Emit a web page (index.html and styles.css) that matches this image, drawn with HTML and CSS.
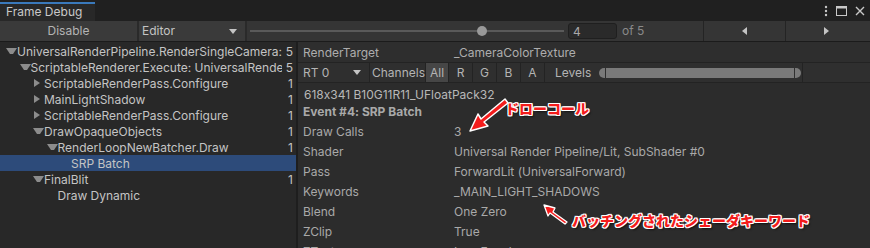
FILE: index.html
```html
<!DOCTYPE html>
<html lang="en">
<head>
  <meta charset="UTF-8" />
  <title>Frame Debug</title>
  <link rel="stylesheet" href="styles.css">
</head>
<body>

  <div class="window">
    <div class="titlebar">
      <div class="tab">Frame Debug</div>
      <div class="win-icons">
        <svg width="4" height="12" viewBox="0 0 4 12"><circle cx="2" cy="2" r="1.2" fill="#c8c8c8"/><circle cx="2" cy="6" r="1.2" fill="#c8c8c8"/><circle cx="2" cy="10" r="1.2" fill="#c8c8c8"/></svg>
        <svg width="11" height="10" viewBox="0 0 11 10"><rect x="0.5" y="0.5" width="10" height="9" fill="none" stroke="#c8c8c8"/><rect x="0.5" y="0.5" width="10" height="2" fill="#c8c8c8"/></svg>
        <svg width="10" height="10" viewBox="0 0 10 10"><path d="M1 1 L9 9 M9 1 L1 9" stroke="#c8c8c8" stroke-width="1.4"/></svg>
      </div>
    </div>

    <div class="toolbar">
      <div class="tb-btn disable">Disable</div>
      <div class="tb-btn dropdown">Editor <span class="caret"></span></div>
      <div class="slider">
        <div class="track"></div>
        <div class="thumb"></div>
      </div>
      <div class="num-field">4</div>
      <div class="of">of 5</div>
      <div class="step"><span class="tri left"></span></div>
      <div class="step"><span class="tri right"></span></div>
    </div>

    <div class="main">
      <div class="tree">
        <div class="row" style="--lvl:0"><span class="arrow open"></span><span class="name">UniversalRenderPipeline.RenderSingleCamera: Main Camera</span><span class="count">5</span></div>
        <div class="row" style="--lvl:1"><span class="arrow open"></span><span class="name">ScriptableRenderer.Execute: UniversalRenderPipelineAsset_Renderer</span><span class="count">5</span></div>
        <div class="row" style="--lvl:2"><span class="arrow closed"></span><span class="name">ScriptableRenderPass.Configure</span><span class="count">1</span></div>
        <div class="row" style="--lvl:2"><span class="arrow closed"></span><span class="name">MainLightShadow</span><span class="count">1</span></div>
        <div class="row" style="--lvl:2"><span class="arrow closed"></span><span class="name">ScriptableRenderPass.Configure</span><span class="count">1</span></div>
        <div class="row" style="--lvl:2"><span class="arrow open"></span><span class="name">DrawOpaqueObjects</span><span class="count">1</span></div>
        <div class="row" style="--lvl:3"><span class="arrow open"></span><span class="name">RenderLoopNewBatcher.Draw</span><span class="count">1</span></div>
        <div class="row selected" style="--lvl:4"><span class="arrow"></span><span class="name">SRP Batch</span><span class="count"></span></div>
        <div class="row" style="--lvl:2"><span class="arrow open"></span><span class="name">FinalBlit</span><span class="count">1</span></div>
        <div class="row" style="--lvl:3"><span class="arrow"></span><span class="name">Draw Dynamic</span><span class="count"></span></div>
      </div>

      <div class="details">
        <div class="head-row">
          <span class="label">RenderTarget</span>
          <span class="value">_CameraColorTexture</span>
        </div>
        <div class="rt-bar">
          <div class="cell rt">RT 0 <span class="caret"></span></div>
          <div class="cell chan-label">Channels</div>
          <div class="cell ch on">All</div>
          <div class="cell ch">R</div>
          <div class="cell ch">G</div>
          <div class="cell ch">B</div>
          <div class="cell ch">A</div>
          <div class="cell levels">
            <span>Levels</span>
            <div class="range"><span class="cap l"></span><span class="fill"></span><span class="cap r"></span></div>
          </div>
        </div>
        <div class="info format">618x341 B10G11R11_UFloatPack32</div>
        <div class="info event">Event #4: SRP Batch</div>
        <div class="props">
          <span>Draw Calls</span><span>3</span>
          <span>Shader</span><span>Universal Render Pipeline/Lit, SubShader #0</span>
          <span>Pass</span><span>ForwardLit (UniversalForward)</span>
          <span>Keywords</span><span>_MAIN_LIGHT_SHADOWS</span>
          <span>Blend</span><span>One Zero</span>
          <span>ZClip</span><span>True</span>
          <span>ZTest</span><span>LessEqual</span>
        </div>
      </div>
    </div>

    <!-- annotations -->
    <div class="note note-calls">ドローコール</div>
    <div class="note note-keywords">バッチングされたシェーダキーワード</div>
    <svg class="pointer p1" width="44" height="40" viewBox="0 0 44 40">
      <path d="M38 4 L14 24 L11 19 L3 36 L21 31 L17 27 L41 8 Z" fill="#f41c1c" stroke="#fff" stroke-width="1.5" stroke-linejoin="round"/>
    </svg>
    <svg class="pointer p2" width="28" height="24" viewBox="0 0 28 24">
      <path d="M25 20 L11 10 L13 6 L2 3 L6 14 L8 11 L23 22 Z" fill="#f41c1c" stroke="#fff" stroke-width="1.3" stroke-linejoin="round"/>
    </svg>
  </div>

</body>
</html>
```

FILE: styles.css
```css
* {
  box-sizing: border-box;
}
body {
  margin: 0;
  background: #282828;
  font-family: Inter, "Noto Sans", sans-serif;
  font-size: 12px;
  font-feature-settings: "calt" 0;
  color: #c4c4c4;
}

.window {
  position: relative;
  width: 870px;
  height: 248px;
  overflow: hidden;
  display: flex;
  flex-direction: column;
}

/* title bar */
.titlebar {
  height: 21px;
  background: #202020;
  display: flex;
  align-items: flex-end;
  justify-content: space-between;
}
.tab {
  width: 95px;
  height: 19px;
  background: #282828;
  border-top: 2px solid #3a79bb;
  padding-left: 6px;
  line-height: 16px;
  color: #c8c8c8;
}
.win-icons {
  display: flex;
  align-items: center;
  gap: 8px;
  height: 21px;
  padding-right: 5px;
}

/* toolbar */
.toolbar {
  height: 21px;
  background: #353535;
  border-bottom: 1px solid #1b1b1b;
  display: flex;
  align-items: stretch;
}
.tb-btn {
  background: #3a3a3a;
  border-right: 2px solid #2a2a2a;
  line-height: 20px;
  color: #c4c4c4;
}
.disable {
  width: 139px;
  text-align: center;
  color: #b4b4b4;
}
.dropdown {
  width: 108px;
  padding-left: 3px;
  position: relative;
}
.caret {
  position: absolute;
  right: 8px;
  top: 8px;
  border-left: 4px solid transparent;
  border-right: 4px solid transparent;
  border-top: 5px solid #c4c4c4;
}
.slider {
  position: relative;
  width: 318px;
  margin-left: 3px;
}
.track {
  position: absolute;
  left: 0;
  right: 4px;
  top: 9px;
  height: 2px;
  background: #5a5a5a;
}
.thumb {
  position: absolute;
  left: 227px;
  top: 5px;
  width: 10px;
  height: 10px;
  border-radius: 50%;
  background: #999999;
}
.num-field {
  width: 49px;
  margin: 2px 0;
  background: #2a2a2a;
  border: 1px solid #1f1f1f;
  border-radius: 3px;
  padding-left: 4px;
  line-height: 15px;
  color: #a8a8a8;
}
.of {
  width: 86px;
  padding-left: 5px;
  line-height: 20px;
  color: #8a8a8a;
}
.step {
  width: 82px;
  border-left: 1px solid #242424;
  display: flex;
  align-items: center;
  justify-content: center;
}
.tri {
  border-top: 4px solid transparent;
  border-bottom: 4px solid transparent;
}
.tri.left { border-right: 5px solid #c4c4c4; }
.tri.right { border-left: 5px solid #c4c4c4; }

/* main area */
.main {
  flex: 1;
  display: flex;
  min-height: 0;
}
.tree {
  width: 298px;
  padding-top: 1px;
  background: #282828;
  border-right: 2px solid #1e1e1e;
}
.row {
  display: flex;
  align-items: center;
  height: 16px;
  padding-left: calc(5px + var(--lvl) * 13.5px);
  padding-right: 3px;
  white-space: nowrap;
}
.row.selected {
  background: #2d4b7a;
}
.row .name {
  flex: 1;
  overflow: hidden;
  margin-right: 3px;
  color: #c4c4c4;
}
.row .count {
  width: 8px;
  text-align: right;
  color: #c4c4c4;
}
.arrow {
  width: 12px;
  flex: none;
}
.arrow.open::before {
  content: "";
  display: block;
  margin-left: 1px;
  border-left: 4px solid transparent;
  border-right: 4px solid transparent;
  border-top: 6px solid #8c8c8c;
}
.arrow.closed::before {
  content: "";
  display: block;
  margin-left: 2px;
  border-top: 4px solid transparent;
  border-bottom: 4px solid transparent;
  border-left: 6px solid #8c8c8c;
}

.details {
  flex: 1;
  background: #2c2c2c;
  color: #adadad;
}
.head-row {
  height: 21px;
  display: grid;
  grid-template-columns: 151px 1fr;
  align-items: center;
  padding-left: 5px;
  padding-top: 1px;
  background: #2e2e2e;
  border-bottom: 1px solid #232323;
}
.rt-bar {
  height: 20px;
  display: flex;
  background: #2f2f2f;
  border-bottom: 1px solid #232323;
}
.cell {
  border-right: 1px solid #232323;
  line-height: 19px;
  color: #b4b4b4;
}
.rt {
  position: relative;
  width: 72px;
  padding-left: 5px;
}
.rt .caret {
  top: 7px;
}
.chan-label {
  width: 56px;
  padding-left: 2px;
}
.ch {
  width: 24px;
  text-align: center;
}
.ch.on {
  width: 23px;
  background: #464646;
}
.levels {
  width: 258px;
  display: flex;
  align-items: center;
  gap: 8px;
  padding-left: 10px;
}
.range {
  display: flex;
  align-items: center;
  height: 10px;
  width: 202px;
}
.range .fill {
  flex: 1;
  height: 10px;
  background: #7a7a7a;
  margin: 0 1px;
}
.range .cap {
  width: 6px;
  height: 10px;
  background: #7a7a7a;
}
.range .cap.l { border-radius: 5px 0 0 5px; }
.range .cap.r { border-radius: 0 5px 5px 0; }

.info {
  height: 17px;
  line-height: 17px;
  padding-left: 6px;
  color: #b8b8b8;
}
.format {
  margin-top: 3px;
}
.event {
  font-weight: 700;
  padding-left: 5px;
  color: #a9a9a9;
}
.props {
  display: grid;
  grid-template-columns: 151px 1fr;
  grid-auto-rows: 20px;
  align-items: center;
  padding-left: 5px;
  margin-top: 1px;
  color: #a9a9a9;
  white-space: nowrap;
}

/* red annotations laid over the window */
.note {
  position: absolute;
  font-family: "Noto Sans CJK JP", sans-serif;
  font-weight: 900;
  font-size: 14px;
  line-height: 16px;
  color: #f41c1c;
  text-shadow:
    1px 0 0 #fff, -1px 0 0 #fff, 0 1px 0 #fff, 0 -1px 0 #fff,
    1px 1px 0 #fff, -1px -1px 0 #fff, 1px -1px 0 #fff, -1px 1px 0 #fff,
    2px 2px 2px rgba(0, 0, 0, 0.6);
}
.note-calls {
  left: 505px;
  top: 100px;
}
.note-keywords {
  left: 572px;
  top: 212px;
}
.pointer {
  position: absolute;
}
.p1 {
  left: 467px;
  top: 95px;
}
.p2 {
  left: 542px;
  top: 202px;
}
```
